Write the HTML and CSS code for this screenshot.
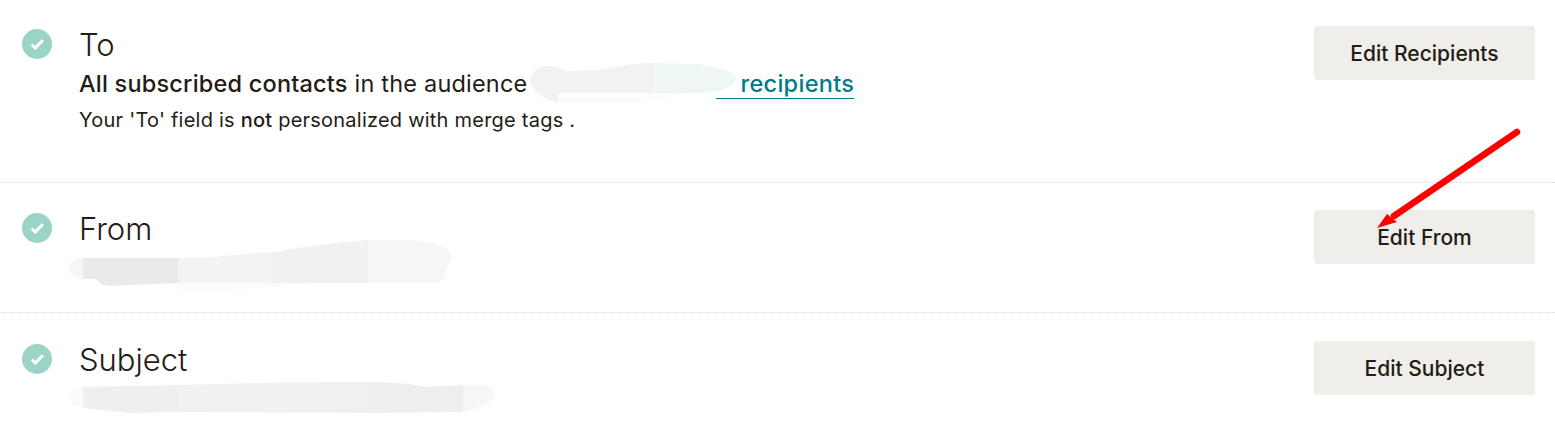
FILE: index.html
```html
<!DOCTYPE html>
<html lang="en">

<head>
    <meta charset="UTF-8">
    <title>Campaign Checklist</title>
    <link rel="stylesheet" href="styles.css">
</head>

<body>
    <div class="checklist">

        <div class="row row-to">
            <svg class="check" viewBox="0 0 30 30"><circle cx="15" cy="15" r="15" fill="#9bd4c7"/><path d="M9.8 15.6l3.5 3.5 7.6-7.8" fill="none" stroke="#fff" stroke-width="3"/></svg>
            <div class="info">
                <h2>To</h2>
                <p class="line"><strong>All subscribed contacts</strong> in the audience<span class="gap"></span><a href="#">recipients</a></p>
                <p class="note">Your 'To' field is <strong>not</strong> personalized with merge tags .</p>
            </div>
            <button>Edit Recipients</button>
            <svg class="smudge smudge-to" viewBox="530 62 206 42">
                <path d="M558 93 L690 93 L640 103 L558 103Z" fill="#fcfcfc"/>
                <path d="M540 67 Q552 64 566 71 L600 70 Q630 63 653 63 L653 93 L558 93 L558 103 Q538 98 531 84 Q529 72 540 67Z" fill="#f2f2f1"/>
                <path d="M653 63 L695 64 Q732 68 736 78 Q734 92 700 93 L653 93Z" fill="#eff6f6"/>
            </svg>
        </div>

        <div class="row">
            <svg class="check" viewBox="0 0 30 30"><circle cx="15" cy="15" r="15" fill="#9bd4c7"/><path d="M9.8 15.6l3.5 3.5 7.6-7.8" fill="none" stroke="#fff" stroke-width="3"/></svg>
            <div class="info">
                <h2>From</h2>
                <svg class="smudge-line smudge-from" viewBox="69 240 382 54">
                    <path d="M178 283 L310 283 Q240 291 178 294Z" fill="#fcfcfc"/>
                    <path d="M80 258 L83 258 L83 279 L80 279 Q69 276 69 268 Q70 260 80 258Z" fill="#f3f7f6"/>
                    <path d="M83 258 L178 258 L178 283 L107 286 Q98 284 97 279 L83 279Z" fill="#eaeae8"/>
                    <path d="M178 258 L205 258 Q240 254 273 252 L273 283 L178 283Z" fill="#f3f3f2"/>
                    <path d="M273 252 Q320 244 368 240 L368 283 L273 283Z" fill="#f1f1f1"/>
                    <path d="M368 240 L415 240 Q430 243 440 246 Q452 248 451 258 Q450 264 445 268 Q448 280 436 283 L368 283Z" fill="#f6f6f6"/>
                </svg>
            </div>
            <button>Edit From</button>
        </div>

        <div class="row row-subject">
            <svg class="check" viewBox="0 0 30 30"><circle cx="15" cy="15" r="15" fill="#9bd4c7"/><path d="M9.8 15.6l3.5 3.5 7.6-7.8" fill="none" stroke="#fff" stroke-width="3"/></svg>
            <div class="info">
                <h2>Subject</h2>
                <svg class="smudge-line smudge-subject" viewBox="68 382 428 32">
                    <path d="M83 387 L72 389 Q66 398 72 405 L83 408Z" fill="#fbfbfb"/>
                    <path d="M83 387 L178 385 L178 412 L130 413 Q110 411 83 408Z" fill="#efefef"/>
                    <path d="M178 385 Q260 382 368 382 L368 413 L178 412Z" fill="#f1f1f1"/>
                    <path d="M368 382 Q400 382 427 387 L463 385 L463 412 L368 413Z" fill="#f0eded"/>
                    <path d="M463 385 L485 385 Q496 390 495 396 Q490 405 463 412Z" fill="#f8f7f6"/>
                </svg>
            </div>
            <button>Edit Subject</button>
        </div>

    </div>

    <svg class="arrow" viewBox="0 0 160 110">
        <path d="M153 8 L30 92" fill="none" stroke="#fe0000" stroke-width="6.5" stroke-linecap="round"/>
        <path d="M13 104 L23 90 L33 98Z" fill="#fe0000"/>
    </svg>
</body>

</html>
```

FILE: styles.css
```css
* {
    box-sizing: border-box;
}

body {
    margin: 0;
    background-color: #fff;
    color: #241c15;
    font-family: 'Inter', 'Liberation Sans', sans-serif;
    position: relative;
    height: 446px;
    overflow: hidden;
}

.checklist {
    margin-top: -1px;
}

.row {
    display: flex;
    align-items: flex-start;
    position: relative;
    height: 130px;
    padding: 27px 20px 0 22px;
    border-bottom: 1px dotted #dcdcd8;
}

.row-to {
    height: 184px;
}

.row-subject {
    padding-top: 28px;
    border-bottom: none;
}

.check {
    width: 30px;
    height: 30px;
    flex: none;
    margin-top: 3px;
}

.info {
    flex: 1;
    padding-left: 27px;
}

h2 {
    margin: 0;
    font-size: 31px;
    font-weight: 300;
    line-height: 38px;
}

.line {
    margin: 4px 0 0;
    font-size: 23.5px;
    line-height: 32px;
    letter-spacing: 0.2px;
}

.line strong {
    font-weight: 500;
}

.gap {
    display: inline-block;
    width: 189px;
}

.line a {
    display: inline-block;
    padding-left: 24px;
    line-height: 28px;
    color: #007c89;
    font-weight: 500;
    letter-spacing: 0.3px;
    text-decoration: none;
    border-bottom: 1px solid #007c89;
}

.note {
    margin: 7px 0 0;
    font-size: 20px;
    line-height: 26px;
    letter-spacing: 0.23px;
}

.note strong {
    font-weight: 500;
}

button {
    width: 221px;
    height: 54px;
    flex: none;
    background-color: #efeeea;
    color: #241c15;
    border: none;
    border-radius: 3px;
    font-family: inherit;
    font-size: 21px;
    font-weight: 500;
}

.smudge-line {
    display: block;
}

.smudge-from {
    width: 382px;
    height: 54px;
    margin: -8px 0 0 -10px;
}

.smudge-subject {
    width: 428px;
    height: 32px;
    margin: 3px 0 0 -11px;
}

.smudge {
    position: absolute;
}

.smudge-to {
    left: 530px;
    top: 63px;
    width: 206px;
    height: 42px;
}

.arrow {
    position: absolute;
    left: 1364px;
    top: 124px;
    width: 160px;
    height: 110px;
}
```
